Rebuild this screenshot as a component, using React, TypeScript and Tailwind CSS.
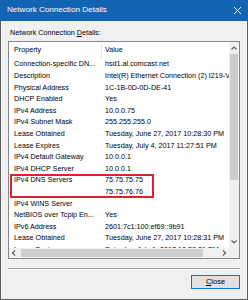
import type { ReactNode } from "react";

const ROWS: [string, string][] = [
  ["Connection-specific DN...", "hsd1.al.comcast.net"],
  ["Description", "Intel(R) Ethernet Connection (2) I219-V"],
  ["Physical Address", "1C-1B-0D-0D-DE-41"],
  ["DHCP Enabled", "Yes"],
  ["IPv4 Address", "10.0.0.75"],
  ["IPv4 Subnet Mask", "255.255.255.0"],
  ["Lease Obtained", "Tuesday, June 27, 2017 10:28:30 PM"],
  ["Lease Expires", "Tuesday, July 4, 2017 11:27:51 PM"],
  ["IPv4 Default Gateway", "10.0.0.1"],
  ["IPv4 DHCP Server", "10.0.0.1"],
  ["IPv4 DNS Servers", "75.75.75.75"],
  ["", "75.75.76.76"],
  ["IPv4 WINS Server", ""],
  ["NetBIOS over Tcpip En...", "Yes"],
  ["IPv6 Address", "2601:7c1:100:ef69::9b91"],
  ["Lease Obtained", "Tuesday, June 27, 2017 10:28:31 PM"],
  ["Lease Expires", "Saturday, July 1, 2017 10:28:31 PM"],
];

function Chevron({ dir }: { dir: "up" | "down" | "left" | "right" }) {
  const d = {
    up: "M1.5 5.5 L4 3 L6.5 5.5",
    down: "M1.5 2.5 L4 5 L6.5 2.5",
    left: "M5 1.5 L2.5 4 L5 6.5",
    right: "M3 1.5 L5.5 4 L3 6.5",
  }[dir];
  return (
    <svg width="8" height="8" viewBox="0 0 8 8">
      <path d={d} fill="none" stroke="#606060" strokeWidth="1.2" />
    </svg>
  );
}

function Cell({ children, className }: { children: ReactNode; className?: string }) {
  return <div className={`whitespace-nowrap overflow-hidden ${className ?? ""}`}>{children}</div>;
}

export default function App() {
  return (
    <div className="w-[248px] h-[300px] flex flex-col font-['Liberation_Sans',Arial,sans-serif] text-black select-none">
      {/* title bar */}
      <div className="h-[21px] bg-[#1464b4] flex items-center justify-between pl-[7px] pr-[6px] text-white">
        <span className="text-[8.1px] leading-none">Network Connection Details</span>
        <svg width="9" height="9" viewBox="0 0 9 9">
          <path d="M1 1 L8 8 M8 1 L1 8" stroke="#fff" strokeWidth="1" />
        </svg>
      </div>

      <div className="flex-1 flex flex-col bg-[#f0f0f0] border-x border-b border-[#5f5f5f] px-[7px]">
        <div className="mt-[7px] h-[10px] leading-[10px] text-[7.2px] pl-[2px]">
          Network Connection <span className="underline">D</span>etails:
        </div>

        {/* list box */}
        <div className="mt-[3px] h-[218px] border border-[#828790] bg-white flex flex-col">
          <div className="flex-1 flex min-h-0">
            <div className="flex-1 min-w-0 overflow-hidden relative text-[7.2px]">
              <div className="h-[17px] flex items-center">
                <Cell className="w-[93px] pl-[5px] h-full flex items-center border-r border-[#e5e5e5]">Property</Cell>
                <Cell className="pl-[3px]">Value</Cell>
              </div>
              {ROWS.map(([k, v], i) => (
                <div key={i} className="h-[11.6px] flex items-center">
                  <Cell className="w-[93px] pl-[5px] shrink-0">{k}</Cell>
                  <Cell className="pl-[3px]">{v}</Cell>
                </div>
              ))}
              <div className="absolute left-[1px] top-[132px] w-[144px] h-[24px] border-2 border-[#e0202a]" />
            </div>

            {/* vertical scrollbar */}
            <div className="w-[10px] bg-[#f0f0f0] flex flex-col items-center">
              <div className="h-[12px] flex items-center justify-center">
                <Chevron dir="up" />
              </div>
              <div className="flex-1 w-full px-[1px] flex flex-col">
                <div className="h-[126px] bg-[#cdcdcd]" />
              </div>
              <div className="h-[12px] flex items-center justify-center">
                <Chevron dir="down" />
              </div>
            </div>
          </div>

          {/* horizontal scrollbar */}
          <div className="h-[10px] flex bg-[#f0f0f0]">
            <div className="w-[10px] flex items-center justify-center">
              <Chevron dir="left" />
            </div>
            <div className="flex-1 py-[1px] pl-[2px]">
              <div className="w-[182px] h-full bg-[#cdcdcd]" />
            </div>
            <div className="w-[10px] flex items-center justify-center">
              <Chevron dir="right" />
            </div>
            <div className="w-[10px]" />
          </div>
        </div>

        <div className="mt-[9px] h-[2px] border-t border-[#a0a0a0] border-b border-b-white" />

        <div className="mt-[5px] flex justify-end">
          <button className="w-[49px] h-[14px] bg-[#e1e1e1] border border-[#0078d7] text-[7.5px] leading-none flex items-center justify-center">
            <span className="underline">C</span>lose
          </button>
        </div>
      </div>
    </div>
  );
}
